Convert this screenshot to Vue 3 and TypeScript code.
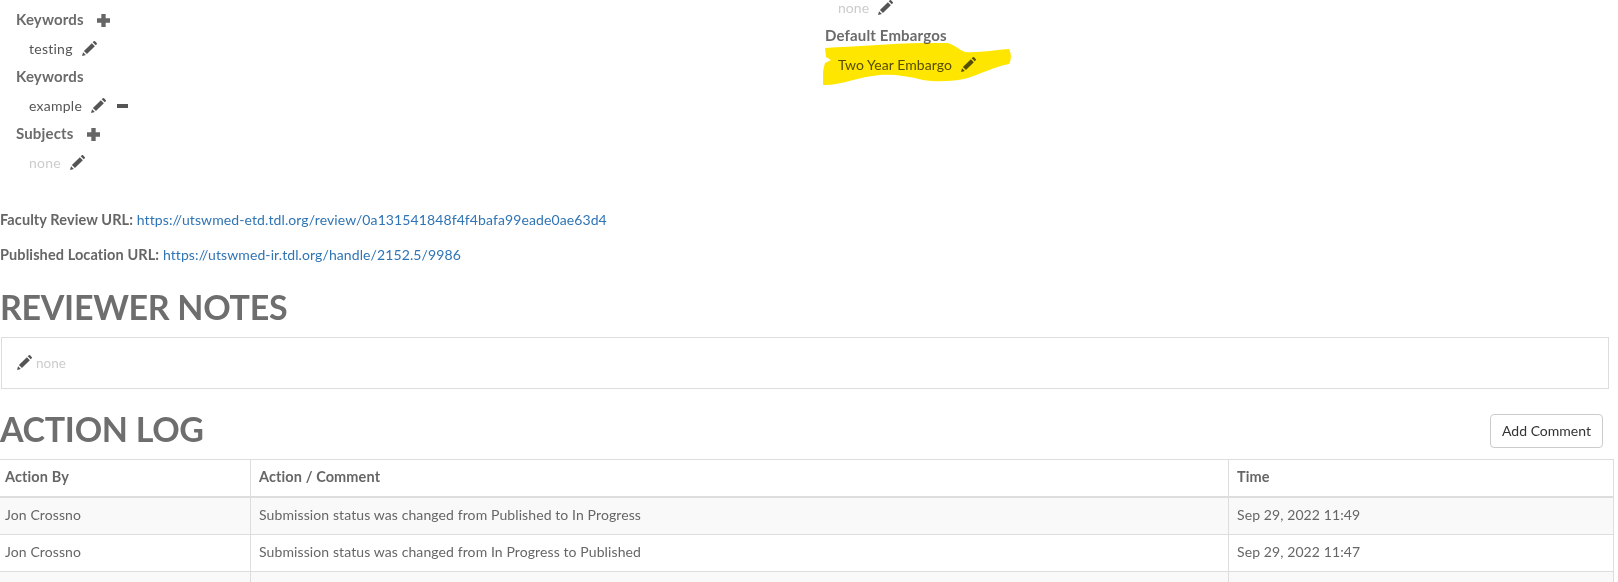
<script setup lang="ts">
const rows = [
  { by: 'Jon Crossno', action: 'Submission status was changed from Published to In Progress', time: 'Sep 29, 2022 11:49' },
  { by: 'Jon Crossno', action: 'Submission status was changed from In Progress to Published', time: 'Sep 29, 2022 11:47' },
  { by: '', action: '', time: '' },
]
</script>

<template>
  <div class="page">
    <svg width="0" height="0" class="defs">
      <symbol id="pencil" viewBox="0 0 14 14">
        <path d="M0 14 L1 10.4 L3.6 13 Z M1.8 9.4 L9.2 2 L12 4.8 L4.6 12.2 Z M10 1.2 L11 .2 Q11.6 -.2 12.2 .3 L13.7 1.8 Q14.2 2.4 13.8 3 L12.8 4 Z" />
      </symbol>
      <symbol id="plus" viewBox="0 0 12 12">
        <path d="M4 0 H8 V4 H12 V8 H8 V12 H4 V8 H0 V4 H4 Z" />
      </symbol>
    </svg>

    <div class="meta">
      <div class="col left">
        <div class="label">Keywords <svg class="plus"><use href="#plus" /></svg></div>
        <div class="value">testing <svg class="pencil"><use href="#pencil" /></svg></div>
        <div class="label">Keywords</div>
        <div class="value">example <svg class="pencil"><use href="#pencil" /></svg><span class="minus"></span></div>
        <div class="label">Subjects <svg class="plus"><use href="#plus" /></svg></div>
        <div class="value muted">none <svg class="pencil"><use href="#pencil" /></svg></div>
      </div>
      <div class="col right">
        <div class="value muted first-row">none <svg class="pencil"><use href="#pencil" /></svg></div>
        <div class="label">Default Embargos</div>
        <div class="value">Two Year Embargo <svg class="pencil"><use href="#pencil" /></svg></div>
        <svg class="marker" viewBox="0 0 190 44" width="190" height="44">
          <path d="M2 5 C40 3 90 -1 125 0 C132 2 136 7 142 9 C155 10 172 7 186 6 C189 12 188 18 186 21 C170 24 158 31 145 35 C130 39 112 39 100 37 C85 33 70 31 57 32 C35 34 15 43 0 42 C-1 34 0 26 2 20 L8 17 L3 14 Z" />
        </svg>
      </div>
    </div>

    <p class="url first"><b>Faculty Review URL:</b> <a>https://utswmed-etd.tdl.org/review/0a131541848f4f4bafa99eade0ae63d4</a></p>
    <p class="url"><b>Published Location URL:</b> <a>https://utswmed-ir.tdl.org/handle/2152.5/9986</a></p>

    <h2 class="notes-title">REVIEWER NOTES</h2>
    <div class="notes"><svg class="pencil note-pencil"><use href="#pencil" /></svg><span class="note-text">none</span></div>

    <div class="log-head">
      <h2>ACTION LOG</h2>
      <button type="button">Add Comment</button>
    </div>

    <table>
      <colgroup><col class="c1" /><col class="c2" /><col /></colgroup>
      <thead>
        <tr><th>Action By</th><th>Action / Comment</th><th>Time</th></tr>
      </thead>
      <tbody>
        <tr v-for="(r, i) in rows" :key="i">
          <td>{{ r.by }}</td><td>{{ r.action }}</td><td>{{ r.time }}</td>
        </tr>
      </tbody>
    </table>
  </div>
</template>

<style>
html, body { margin: 0; background: #fff; overflow: hidden; }
</style>

<style scoped>
.page {
  width: 1618px;
  height: 582px;
  overflow: hidden;
  font-family: Lato, "Noto Sans", sans-serif;
  font-size: 14px;
  color: #555;
}
.defs { position: absolute; }
.meta {
  display: grid;
  grid-template-columns: 825px 1fr;
  height: 190px;
}
.col.left { padding: 6px 0 0 16px; }
.col.right { position: relative; }
.label, .value {
  box-sizing: border-box;
  height: 28.5px;
  display: flex;
  align-items: center;
  white-space: pre;
}
.label {
  font-weight: 700;
  color: #6b6b6b;
  font-size: 15px;
  letter-spacing: .15px;
  padding-bottom: 2px;
}
.value { padding-left: 13px; letter-spacing: .05px; }
.left .value { letter-spacing: .25px; }
.first-row { height: 14.5px; margin-bottom: 7px; }
.muted { color: #ccc; }
.plus { width: 13px; height: 13px; fill: #666; margin-left: 10px; margin-top: 2px; }
.pencil { width: 15px; height: 15px; fill: #555; margin-left: 5px; }
.minus { width: 11px; height: 3.5px; background: #555; margin-left: 11px; }
.marker {
  position: absolute;
  left: -2px;
  top: 43px;
  fill: #ffe600;
  mix-blend-mode: multiply;
}
.url { margin: 0 0 17px; height: 18px; line-height: 18px; font-size: 14px; letter-spacing: .1px; color: #666; }
.url b { font-size: 14.5px; }
.url.first { margin-top: 21px; }
.url a { color: #2f74b5; }
.notes-title, .log-head h2 {
  margin: 0;
  font-size: 34px;
  line-height: 40px;
  font-weight: 700;
  letter-spacing: -.3px;
  color: #6e6e6e;
}
.notes-title { margin-top: 23px; }
.notes {
  margin: 10px 9px 0 1px;
  height: 50px;
  border: 1px solid #ddd;
  display: flex;
  align-items: center;
  padding-left: 15px;
}
.note-pencil { margin-left: 0; margin-top: -2px; }
.note-text { color: #ccc; font-size: 13.5px; margin-left: 4px; margin-top: -1px; }
.log-head {
  display: flex;
  justify-content: space-between;
  align-items: flex-start;
  margin: 19px 15px 0 0;
  height: 51px;
}
.log-head h2 { margin-top: 1px; }
button {
  margin-top: 6px;
  width: 113px;
  height: 34px;
  background: #fff;
  border: 1px solid #ccc;
  border-radius: 4px;
  font: inherit;
  font-size: 14px;
  color: #333;
  padding: 0 0 2px;
}
table {
  margin-left: -1px;
  width: 1615px;
  table-layout: fixed;
  border-collapse: collapse;
  border: 1px solid #ddd;
  font-size: 14px;
  letter-spacing: .1px;
}
.c1 { width: 251px; }
.c2 { width: 978px; }
th, td {
  border: 1px solid #ddd;
  padding: 0 5px 3px;
  height: 33px;
  text-align: left;
  color: #666;
  font-weight: 400;
  white-space: nowrap;
}
th { font-weight: 700; font-size: 14.5px; border-bottom-width: 2px; }
td:nth-child(n+2), th:nth-child(n+2) { padding-left: 8px; }
tbody tr:nth-child(odd) { background: #f9f9f9; }
</style>
